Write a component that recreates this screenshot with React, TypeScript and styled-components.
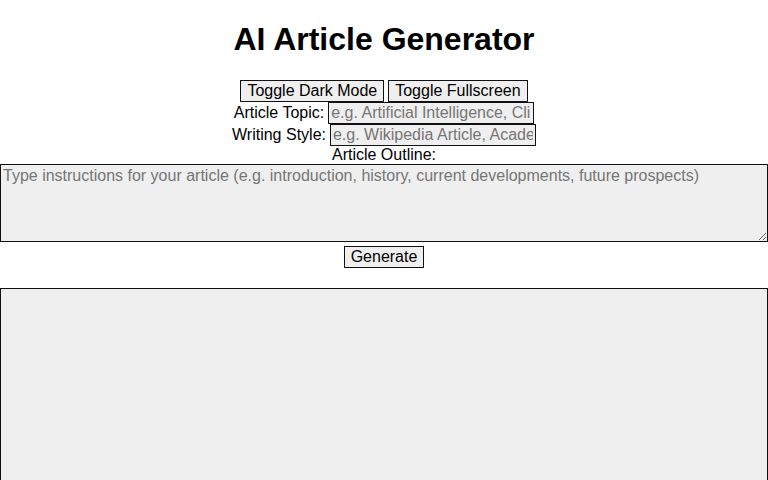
import React, { useState } from 'react';
import styled, { createGlobalStyle } from 'styled-components';

const GlobalStyle = createGlobalStyle`
  html, body {
    margin: 0;
    padding: 0;
    background: #ffffff;
    color: #000000;
    font-family: "Liberation Sans", Arial, sans-serif;
    font-size: 16px;
  }
`;

const Page = styled.div`
  text-align: center;
  line-height: normal;
`;

const Title = styled.h1`
  font-size: 32px;
  font-weight: bold;
  margin: 21px 0 22px;
  line-height: 37px;
`;

const Row = styled.div`
  display: flex;
  justify-content: center;
  align-items: center;
  gap: 4px;
  height: 22px;
`;

const Button = styled.button`
  font-family: "Liberation Sans", Arial, sans-serif;
  font-size: 16px;
  height: 22px;
  padding: 0 6px;
  border: 1px solid #111;
  background: #efefef;
  color: #000;
  line-height: 18px;
  cursor: pointer;
`;

const Field = styled.input`
  font-family: "Liberation Sans", Arial, sans-serif;
  font-size: 16px;
  width: 206px;
  height: 22px;
  box-sizing: border-box;
  padding: 1px 2px;
  border: 1px solid #111;
  background: #efefef;
  color: #000;
  &::placeholder {
    color: #767676;
  }
`;

const Label = styled.label`
  line-height: 18px;
`;

const OutlineLabel = styled.div`
  height: 18px;
  line-height: 18px;
`;

const Outline = styled.textarea`
  display: block;
  width: 100%;
  height: 78px;
  box-sizing: border-box;
  margin: 0 0 4px;
  padding: 2px;
  font-family: "Liberation Sans", Arial, sans-serif;
  font-size: 16px;
  border: 1px solid #111;
  background: #efefef;
  color: #000;
  &::placeholder {
    color: #767676;
  }
`;

const Output = styled.div`
  margin-top: 20px;
  height: 300px;
  border: 1px solid #111;
  background: #efefef;
  text-align: left;
`;

export default function App() {
  const [topic, setTopic] = useState('');
  const [style, setStyle] = useState('');
  const [outline, setOutline] = useState('');

  return (
    <>
      <GlobalStyle />
      <Page>
        <Title>AI Article Generator</Title>
        <Row>
          <Button>Toggle Dark Mode</Button>
          <Button>Toggle Fullscreen</Button>
        </Row>
        <Row>
          <Label htmlFor="topic">Article Topic:</Label>
          <Field
            id="topic"
            value={topic}
            onChange={(e) => setTopic(e.target.value)}
            placeholder="e.g. Artificial Intelligence, Climate Change"
          />
        </Row>
        <Row>
          <Label htmlFor="style">Writing Style:</Label>
          <Field
            id="style"
            value={style}
            onChange={(e) => setStyle(e.target.value)}
            placeholder="e.g. Wikipedia Article, Academic Paper"
          />
        </Row>
        <OutlineLabel>Article Outline:</OutlineLabel>
        <Outline
          value={outline}
          onChange={(e) => setOutline(e.target.value)}
          placeholder="Type instructions for your article (e.g. introduction, history, current developments, future prospects)"
        />
        <Row>
          <Button>Generate</Button>
        </Row>
        <Output />
      </Page>
    </>
  );
}
